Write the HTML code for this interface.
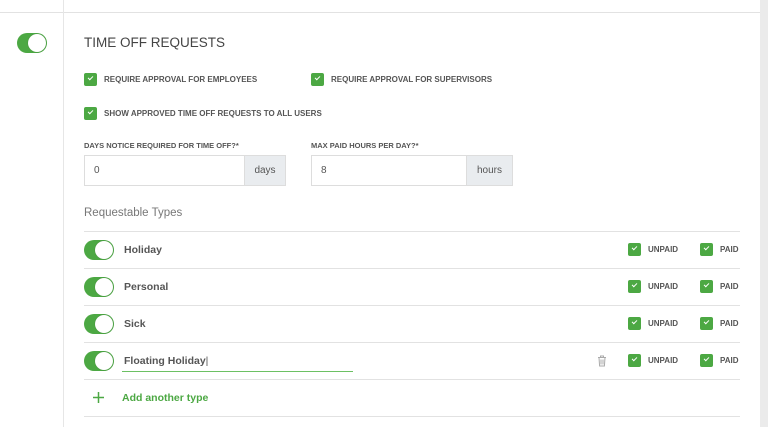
<!DOCTYPE html>
<html><head><meta charset="utf-8"><style>
*{margin:0;padding:0;box-sizing:border-box}
body{width:768px;height:427px;overflow:hidden;background:#fff;font-family:"Liberation Sans",sans-serif;position:relative;color:#444}
.a{position:absolute}
.tg{position:absolute;width:30px;height:20px;border-radius:10px;background:#4ca843}
.tg::after{content:"";position:absolute;right:1px;top:1px;width:18px;height:18px;border-radius:50%;background:#fff;box-shadow:0 0 1px rgba(0,0,0,.3)}
.cb{position:absolute;width:13px;height:13px;background:#4ca843;border-radius:2px}
.cb::after{content:"";position:absolute;left:4px;top:3px;width:4px;height:2px;border-left:1.5px solid #fff;border-bottom:1.5px solid #fff;transform:rotate(-45deg)}
.lb{position:absolute;font-size:8px;font-weight:bold;color:#555;white-space:nowrap}
.hl{position:absolute;left:84px;width:656px;height:1px;background:#e2e2e2}
.nm{position:absolute;left:124px;font-size:10.5px;font-weight:bold;color:#555}
.inp{position:absolute;height:31px;border:1px solid #ddd;font-size:10px;color:#555}
.inp .v{position:absolute;left:9px;top:9px}
.inp .ad{position:absolute;right:0;top:0;bottom:0;background:#e9ecef;border-left:1px solid #ddd;font-size:10px;color:#555;text-align:center;line-height:29px}
</style></head><body>
<div class="a" style="left:760px;top:0;width:8px;height:427px;background:#ebebeb"></div>
<div class="a" style="left:0;top:12px;width:760px;height:1px;background:#e2e2e2"></div>
<div class="a" style="left:63px;top:0;width:1px;height:427px;background:#e6e6e6"></div>
<div class="tg" style="left:17px;top:33px"></div>
<div class="a" style="left:84px;top:35px;font-size:13.5px;color:#444">TIME OFF REQUESTS</div>
<div class="cb" style="left:84px;top:73px"></div><div class="lb" style="left:104px;top:75px">REQUIRE APPROVAL FOR EMPLOYEES</div>
<div class="cb" style="left:311px;top:73px"></div><div class="lb" style="left:331px;top:75px">REQUIRE APPROVAL FOR SUPERVISORS</div>
<div class="cb" style="left:84px;top:107px"></div><div class="lb" style="left:104px;top:109px">SHOW APPROVED TIME OFF REQUESTS TO ALL USERS</div>
<div class="lb" style="left:84px;top:141px;font-size:7.5px">DAYS NOTICE REQUIRED FOR TIME OFF?*</div>
<div class="lb" style="left:311px;top:141px;font-size:7.5px">MAX PAID HOURS PER DAY?*</div>
<div class="inp" style="left:84px;top:155px;width:202px"><span class="v">0</span><div class="ad" style="width:41px">days</div></div>
<div class="inp" style="left:311px;top:155px;width:202px"><span class="v">8</span><div class="ad" style="width:46px">hours</div></div>
<div class="a" style="left:84px;top:207px;font-size:11.5px;color:#777">Requestable Types</div>
<div class="hl" style="top:231px"></div>
<div class="hl" style="top:268px"></div>
<div class="hl" style="top:305px"></div>
<div class="hl" style="top:342px"></div>
<div class="hl" style="top:379px"></div>
<div class="hl" style="top:416px"></div>

<div class="tg" style="left:84px;top:240px"></div><div class="nm" style="top:244px">Holiday</div>
<div class="tg" style="left:84px;top:277px"></div><div class="nm" style="top:281px">Personal</div>
<div class="tg" style="left:84px;top:314px"></div><div class="nm" style="top:318px">Sick</div>
<div class="tg" style="left:84px;top:351px"></div><div class="nm" style="top:355px">Floating Holiday<span style="font-weight:normal">|</span></div>
<div class="a" style="left:122px;top:371px;width:231px;height:1px;background:#6cc063"></div>

<div class="cb" style="left:628px;top:243px"></div><div class="lb" style="left:648px;top:245px">UNPAID</div>
<div class="cb" style="left:700px;top:243px"></div><div class="lb" style="left:720px;top:245px">PAID</div>
<div class="cb" style="left:628px;top:280px"></div><div class="lb" style="left:648px;top:282px">UNPAID</div>
<div class="cb" style="left:700px;top:280px"></div><div class="lb" style="left:720px;top:282px">PAID</div>
<div class="cb" style="left:628px;top:317px"></div><div class="lb" style="left:648px;top:319px">UNPAID</div>
<div class="cb" style="left:700px;top:317px"></div><div class="lb" style="left:720px;top:319px">PAID</div>
<div class="cb" style="left:628px;top:354px"></div><div class="lb" style="left:648px;top:356px">UNPAID</div>
<div class="cb" style="left:700px;top:354px"></div><div class="lb" style="left:720px;top:356px">PAID</div>
<svg class="a" style="left:597px;top:355px" width="10" height="12" viewBox="0 0 10 12"><path d="M1 2.5h8M3.5 2.5V1h3v1.5M2 2.5l.6 8.5h4.8L8 2.5M4 4.5v5M6 4.5v5" fill="none" stroke="#aaa" stroke-width="1"/></svg>

<svg class="a" style="left:93px;top:392px" width="11" height="11" viewBox="0 0 11 11"><path d="M5.5 0v11M0 5.5h11" stroke="#4ca843" stroke-width="1.5"/></svg>
<div class="a" style="left:122px;top:392px;font-size:10.5px;font-weight:bold;color:#4ca843">Add another type</div>
</body></html>
